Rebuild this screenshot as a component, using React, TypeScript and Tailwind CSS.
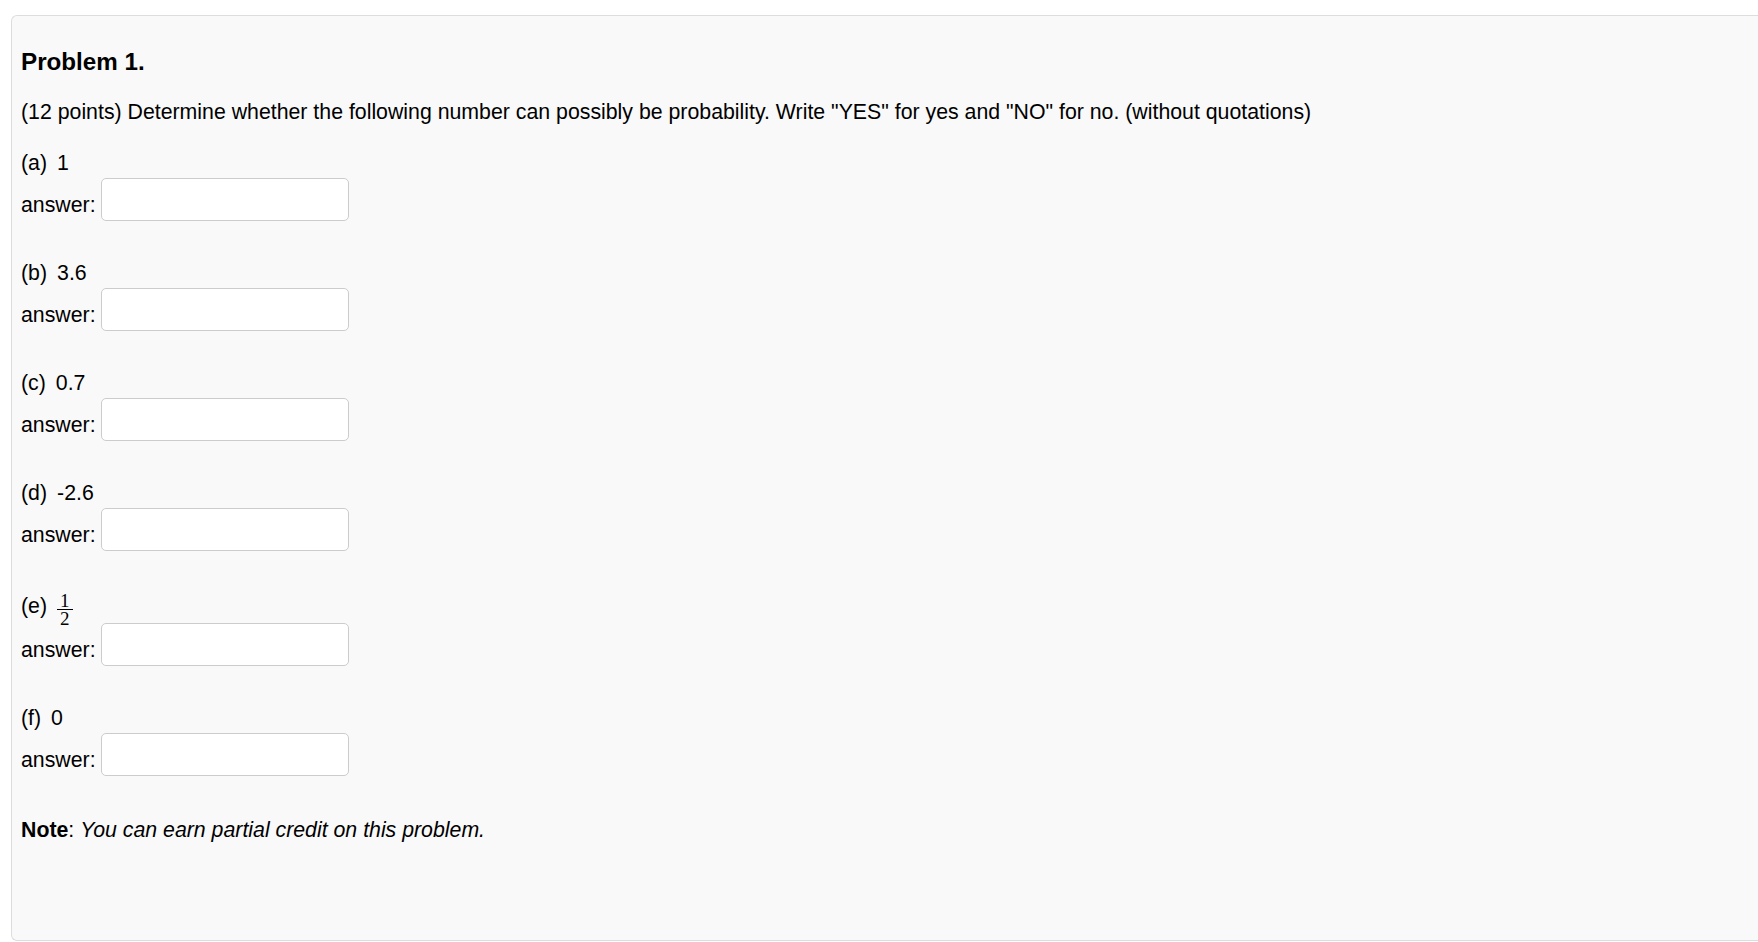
import React from 'react';

interface PartProps {
  letter: string;
  value: React.ReactNode;
  tall?: boolean;
}

const Fraction = ({ top, bottom }: { top: string; bottom: string }) => (
  <span className="inline-flex flex-col items-center font-['Liberation_Serif',serif] text-[19px]">
    <span className="px-[3px] leading-[13px] mb-[2px]">{top}</span>
    <span className="w-full border-t border-black" />
    <span className="px-[3px] leading-[15px] mt-[1px]">{bottom}</span>
  </span>
);

const Part = ({ letter, value, tall }: PartProps) => {
  return (
    <div className="flex flex-col">
      <div className={`flex items-center gap-[10px] ${tall ? 'h-[32px]' : 'h-[24px]'}`}>
        <span className={tall ? '-mt-[2px]' : ''}>({letter})</span>
        <span>{value}</span>
      </div>
      <div className={`flex items-end gap-[5px] ${tall ? 'mt-0' : 'mt-[3px]'}`}>
        <span className="mb-[4px]">answer:</span>
        <input
          type="text"
          className="w-[248px] h-[43px] bg-white border border-[#cccccc] rounded-[5px] outline-none px-2"
        />
      </div>
    </div>
  );
};

const parts: PartProps[] = [
  { letter: 'a', value: '1' },
  { letter: 'b', value: '3.6' },
  { letter: 'c', value: '0.7' },
  { letter: 'd', value: '-2.6' },
  { letter: 'e', value: <Fraction top="1" bottom="2" />, tall: true },
  { letter: 'f', value: '0' },
];

export default function App() {
  return (
    <div className="min-h-screen bg-white pt-[15px] pl-[11px] overflow-hidden font-['Liberation_Sans',Arial,sans-serif] text-black">
      <div className="h-[926px] bg-[#f9f9f9] border border-r-0 border-[#dddddd] rounded-l-[6px] pl-[9px] pt-[32px] text-[21.3px] leading-[24px]">
        <h2 className="text-[24.2px] leading-[28px] font-bold">Problem 1.</h2>
        <p className="mt-[24px]">
          (12 points) Determine whether the following number can possibly be probability. Write "YES" for yes and
          "NO" for no. (without quotations)
        </p>
        <div className="mt-[27px] flex flex-col gap-[40px]">
          {parts.map((p) => (
            <Part key={p.letter} {...p} />
          ))}
        </div>
        <p className="mt-[42px]">
          <b>Note</b>: <i>You can earn partial credit on this problem.</i>
        </p>
      </div>
    </div>
  );
}
